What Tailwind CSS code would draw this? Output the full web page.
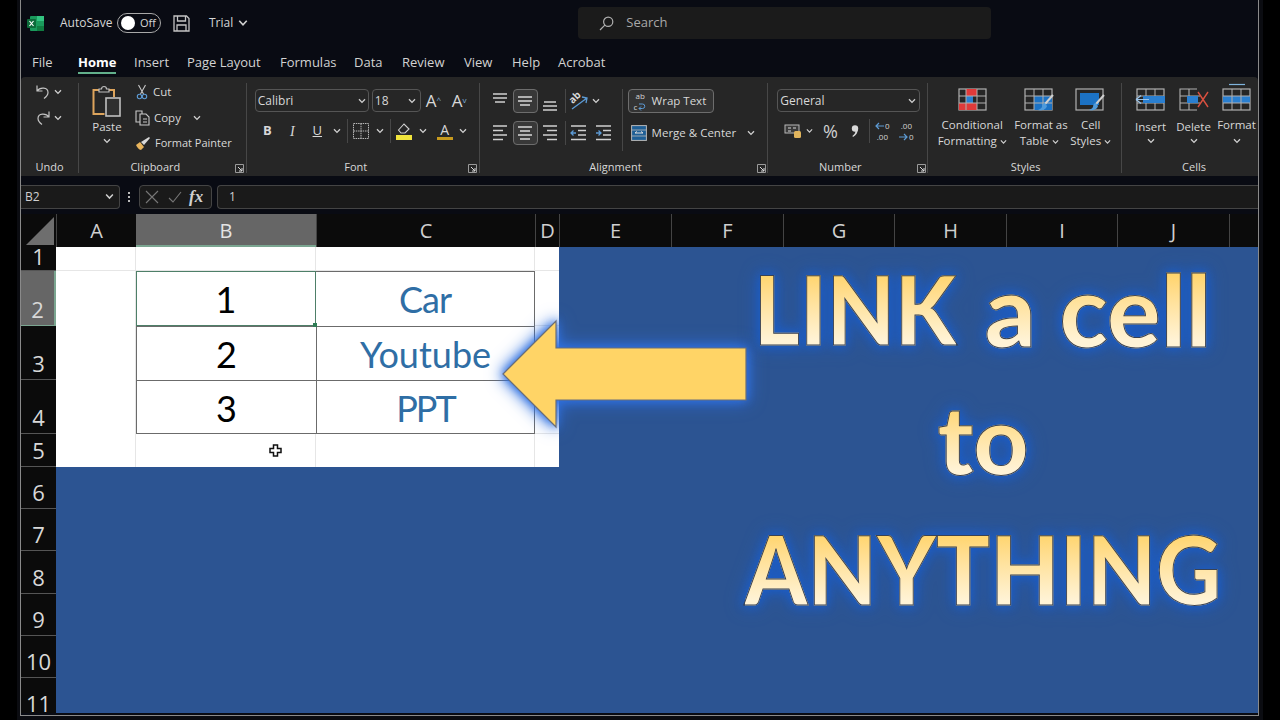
<!DOCTYPE html>
<html lang="en">
<head>
  <meta charset="UTF-8" />
  <title>LINK a cell to ANYTHING</title>
  <script src="https://cdn.jsdelivr.net/npm/@tailwindcss/browser@4"></script>
</head>
<body class="bg-black w-[1280px] h-[720px] overflow-hidden font-['Open_Sans',sans-serif] text-[#d6d6d6]">
  <svg class="hidden">
    <symbol id="chev" viewBox="0 0 8 6"><path d="M1 1.2 4 4.4 7 1.2" fill="none" stroke="#d0d0d0" stroke-width="1.3"/></symbol>
    <symbol id="launch" viewBox="0 0 9 9"><path d="M.5.5h8v8h-8z" fill="none" stroke="#9a9a9a"/><path d="M3 3l4 4M7 4v3H4" fill="none" stroke="#d8d8d8"/></symbol>
  </svg>

  <div class="ml-[17px] w-[1246px] h-[720px] bg-[#0b0c11] pl-[3px]">
    <div class="relative w-[1239px] h-[716px] bg-[#090b13] border-l border-r border-b border-[#8a8a8a] overflow-hidden">

      <!-- title bar -->
      <div class="flex items-center h-[45px] pt-[1px] text-[12px]">
        <svg class="ml-[6px] w-[17px] h-[17px]" viewBox="0 0 17 17"><rect x="3" y="1" width="14" height="15" rx="1" fill="#1a9a5c"/><rect x="10" y="1" width="7" height="5" fill="#33c481"/><rect x="10" y="11" width="7" height="5" fill="#107c41"/><rect y="4" width="9" height="9" rx="1" fill="#0c6b3a"/><path d="M2.5 6l4 5M6.5 6l-4 5" stroke="#fff" stroke-width="1.2"/></svg>
        <span class="ml-[16px] w-[52px]">AutoSave</span>
        <div class="ml-[5px] flex items-center w-[44px] h-[20px] rounded-full border border-[#a8a8a8] pl-[3px]">
          <span class="w-[14px] h-[14px] rounded-full bg-white"></span>
          <span class="ml-[5px] text-[11px]">Off</span>
        </div>
        <svg class="ml-[12px] w-[17px] h-[17px]" viewBox="0 0 17 17" fill="none" stroke="#c4c4c4" stroke-width="1.3"><path d="M1 1h12.5L16 3.500V16H1zM4.500 1v5h8V1M4 16v-6h9v6"/></svg>
        <span class="ml-[19px]">Trial</span>
        <svg class="ml-[5px] w-[10px] h-[8px]"><use href="#chev"/></svg>
        <div class="ml-[330px] flex items-center w-[413px] h-[32px] bg-[#1b1b1b] rounded-[4px] text-[#a8a8a8] text-[13px]">
          <svg class="ml-[21px] w-[15px] h-[15px]" viewBox="0 0 15 15" fill="none" stroke="#b0b0b0" stroke-width="1.2"><circle cx="9.200" cy="5.800" r="4.600"/><path d="M5.800 9.200 1 14"/></svg>
          <span class="ml-[12px]">Search</span>
        </div>
      </div>

      <!-- tabs -->
      <div class="flex h-[32px] text-[13px] leading-[34px] text-[#d2d2d2]">
        <span class="ml-[11px] w-[46px]">File</span>
        <span class="relative w-[56px] font-bold text-white">Home<i class="absolute left-0 bottom-[3px] w-[38px] h-[2px] bg-[#62b08b]"></i></span>
        <span class="w-[53px]">Insert</span>
        <span class="w-[93px]">Page Layout</span>
        <span class="w-[74px]">Formulas</span>
        <span class="w-[48px]">Data</span>
        <span class="w-[62px]">Review</span>
        <span class="w-[48px]">View</span>
        <span class="w-[46px]">Help</span>
        <span>Acrobat</span>
      </div>

      <!-- ribbon -->
      <div class="flex h-[99px] pt-[2px] bg-[#262626] rounded-t-[4px] text-[12px] text-[#d8d8d8]">

        <!-- undo -->
        <div class="w-[57px] flex flex-col">
          <div class="h-[81px] pl-[14px]">
            <div class="flex items-center h-[26px]">
              <svg class="w-[16px] h-[16px]" viewBox="0 0 16 16" fill="none" stroke="#c4c4c4" stroke-width="1.2"><path d="M2 1.500V7h5.500M2 7c3-4 11-4 11 1.500 0 2.500-2 4.500-4 6"/></svg>
              <svg class="ml-[3px] w-[8px] h-[6px]"><use href="#chev"/></svg>
            </div>
            <div class="flex items-center h-[26px]">
              <svg class="w-[16px] h-[16px]" viewBox="0 0 16 16" fill="none" stroke="#c4c4c4" stroke-width="1.2"><path d="M14 1.500V7H8.500M14 7C11 3 3 3 3 8.500c0 2.500 2 4.500 4 6"/></svg>
              <svg class="ml-[3px] w-[8px] h-[6px]"><use href="#chev"/></svg>
            </div>
          </div>
          <span class="text-center text-[11px] leading-[14px]">Undo</span>
        </div>
        <i class="w-px h-[90px] mt-[4px] bg-[#474747]"></i>

        <!-- clipboard -->
        <div class="relative w-[167px] flex flex-col">
          <div class="flex h-[81px]">
            <div class="ml-[13px] w-[30px] flex flex-col items-center">
              <svg class="mt-[6px] w-[30px] h-[32px]" viewBox="0 0 30 32" fill="none"><path d="M7 5H1.500v24h11" stroke="#dda45c" stroke-width="2"/><path d="M17 5h5v7" stroke="#dda45c" stroke-width="2"/><path d="M7 7V4h2.500a2.500 2.500 0 0 1 5 0H17v3z" stroke="#bdbdbd" stroke-width="1.2"/><rect x="14" y="13" width="14" height="18" stroke="#c0c0c0" stroke-width="1.6" fill="#2f2f2f"/></svg>
              <span class="mt-[2px] leading-[16px] text-[11.5px]">Paste</span>
              <svg class="mt-[3px] w-[8px] h-[6px]"><use href="#chev"/></svg>
            </div>
            <div class="ml-[13px] text-[11.5px]">
              <div class="flex items-center h-[26px]">
                <svg class="ml-[1px] w-[12px] h-[16px]" viewBox="0 0 12 16" fill="none" stroke-width="1.1"><path d="M2.500 1 7.500 10M9.500 1 4.500 10" stroke="#c8c8c8"/><circle cx="3.500" cy="12.500" r="2.200" stroke="#5d9bd5"/><circle cx="8.500" cy="12.500" r="2.200" stroke="#5d9bd5"/></svg>
                <span class="ml-[5px]">Cut</span>
              </div>
              <div class="flex items-center h-[26px]">
                <svg class="w-[15px] h-[16px]" viewBox="0 0 15 16" fill="none" stroke="#c8c8c8" stroke-width="1.1"><path d="M5 12H1V1h6v3"/><path d="M5 4h6l3 3v8H5zM8 9h4M8 12h4"/></svg>
                <span class="ml-[4px]">Copy</span>
                <svg class="ml-[12px] w-[8px] h-[6px]"><use href="#chev"/></svg>
              </div>
              <div class="flex items-center h-[25px]">
                <svg class="w-[16px] h-[14px]" viewBox="0 0 16 14"><path d="M1 8l4-3 4 5-3 3C4 13 2 10 1 8z" fill="#e8b45c"/><path d="M6 5l3 3 6-7-1-1z" fill="#d8d8d8"/></svg>
                <span class="ml-[4px] whitespace-nowrap text-[11px]">Format Painter</span>
              </div>
            </div>
          </div>
          <span class="pr-[14px] text-center text-[11px] leading-[14px]">Clipboard</span>
          <svg class="absolute left-[156px] top-[85px] w-[9px] h-[9px]"><use href="#launch"/></svg>
        </div>
        <i class="w-px h-[90px] mt-[4px] bg-[#474747]"></i>

        <!-- font -->
        <div class="relative w-[232px] flex flex-col">
          <div class="h-[81px] pl-[8px] pt-[10px]">
            <div class="flex items-center h-[23px]">
              <div class="flex items-center justify-between w-[114px] h-[23px] border border-[#555] rounded-[4px] px-[2px] text-[12px]">Calibri<svg class="w-[8px] h-[6px]"><use href="#chev"/></svg></div>
              <div class="ml-[3px] flex items-center justify-between w-[49px] h-[23px] border border-[#555] rounded-[4px] px-[2px] text-[12px]">18<svg class="mr-[2px] w-[8px] h-[6px]"><use href="#chev"/></svg></div>
              <span class="ml-[5px] w-[19px] text-[17px] leading-none whitespace-nowrap">A<sup class="text-[#7fb3dc] text-[8px]">^</sup></span>
              <span class="ml-[7px] w-[19px] text-[17px] leading-none whitespace-nowrap">A<sup class="text-[#7fb3dc] text-[8px]">v</sup></span>
            </div>
            <div class="flex items-center h-[24px] mt-[7px] text-[13px]">
              <span class="w-[25px] text-center font-bold">B</span>
              <span class="w-[25px] text-center italic font-['Liberation_Serif',serif] text-[14px]">I</span>
              <span class="w-[25px] text-center underline">U</span>
              <span class="w-[14px] flex justify-center"><svg class="w-[8px] h-[6px]"><use href="#chev"/></svg></span>
              <i class="ml-[3px] w-px h-[24px] bg-[#474747]"></i>
              <svg class="ml-[2px] w-[22px] h-[16px]" viewBox="0 0 22 16" fill="none" stroke="#b8b8b8"><path d="M3.500.5h15v15h-15zM11 .5v15M3.500 8h15" stroke-dasharray="1.500 .8"/></svg>
              <span class="ml-[1px] w-[14px] flex justify-center"><svg class="w-[8px] h-[6px]"><use href="#chev"/></svg></span>
              <i class="ml-[3px] w-px h-[24px] bg-[#474747]"></i>
              <svg class="ml-[2px] w-[22px] h-[18px]" viewBox="0 0 22 18" fill="none"><path d="M5.500 8 11 2l5 5-4 4H8z" stroke="#d0d0d0" stroke-width="1.1"/><rect x="3" y="13" width="16" height="5" fill="#f0e43c"/></svg>
              <span class="ml-[1px] w-[14px] flex justify-center"><svg class="w-[8px] h-[6px]"><use href="#chev"/></svg></span>
              <span class="ml-[4px] w-[22px] flex flex-col items-center"><span class="text-[14px] leading-[14px]">A</span><i class="w-[16px] h-[3px] bg-[#c79a1e]"></i></span>
              <span class="w-[14px] flex justify-center"><svg class="w-[8px] h-[6px]"><use href="#chev"/></svg></span>
            </div>
          </div>
          <span class="pr-[14px] text-center text-[11px] leading-[14px]">Font</span>
          <svg class="absolute left-[221px] top-[85px] w-[9px] h-[9px]"><use href="#launch"/></svg>
        </div>
        <i class="w-px h-[90px] mt-[4px] bg-[#474747]"></i>

        <!-- alignment -->
        <div class="relative w-[288px] flex flex-col">
          <div class="flex h-[81px] pl-[8px] pt-[10px]">
            <div class="w-[134px]">
              <div class="flex items-center h-[24px]">
                <svg class="w-[25px] h-[24px]" viewBox="0 0 25 24" stroke="#d0d0d0" stroke-width="1.3"><path d="M5 5h14M5 9h14M7 13h10"/></svg>
                <span class="w-[25px] h-[24px] flex items-center justify-center border border-[#6d6d6d] rounded-[4px] bg-[#383838]"><svg class="w-[16px] h-[12px]" viewBox="0 0 16 12" stroke="#d8d8d8" stroke-width="1.3"><path d="M1 2h14M1 6h14M3 10h10"/></svg></span>
                <svg class="w-[25px] h-[24px]" viewBox="0 0 25 24" stroke="#d0d0d0" stroke-width="1.3"><path d="M6 13h12M5 17h14M5 21h14"/></svg>
                <i class="ml-[2px] w-px h-[24px] bg-[#474747]"></i>
                <span class="relative ml-[1px] w-[22px] h-[22px]">
                  <span class="absolute left-[1px] top-[1px] text-[10px] leading-[12px] font-bold -rotate-45">ab</span>
                  <svg class="absolute left-0 top-0 w-[22px] h-[22px]" viewBox="0 0 22 22" fill="none"><path d="M5 19 20 8M15 7l5 1-1 5" stroke="#5d9bd5" stroke-width="1.3"/></svg>
                </span>
                <svg class="ml-[3px] w-[8px] h-[6px]"><use href="#chev"/></svg>
              </div>
              <div class="flex items-center h-[24px] mt-[8px]">
                <svg class="w-[25px] h-[24px]" viewBox="0 0 25 24" stroke="#d0d0d0" stroke-width="1.3"><path d="M5 5h14M5 9.500h10M5 14h14M5 18.500h10"/></svg>
                <span class="w-[25px] h-[24px] flex items-center justify-center border border-[#6d6d6d] rounded-[4px] bg-[#383838]"><svg class="w-[16px] h-[16px]" viewBox="0 0 16 16" stroke="#d8d8d8" stroke-width="1.3"><path d="M1 2h14M3 6h10M1 10h14M3 14h10"/></svg></span>
                <svg class="w-[25px] h-[24px]" viewBox="0 0 25 24" stroke="#d0d0d0" stroke-width="1.3"><path d="M5 5h14M9 9.500h10M5 14h14M9 18.500h10"/></svg>
                <i class="ml-[2px] w-px h-[24px] bg-[#474747]"></i>
                <svg class="w-[25px] h-[24px]" viewBox="0 0 25 24" fill="none" stroke="#d0d0d0" stroke-width="1.3"><path d="M5 5h15M12 9.500h8M12 14h8M5 18.500h15"/><path d="M10 12H5M7.500 9.500 5 12l2.500 2.500" stroke="#5d9bd5"/></svg>
                <svg class="w-[25px] h-[24px]" viewBox="0 0 25 24" fill="none" stroke="#d0d0d0" stroke-width="1.3"><path d="M5 5h15M12 9.500h8M12 14h8M5 18.500h15"/><path d="M5 12h5M7.500 9.500 10 12l-2.500 2.500" stroke="#5d9bd5"/></svg>
              </div>
            </div>
            <i class="w-px h-[62px] bg-[#474747]"></i>
            <div class="ml-[5px]">
              <div class="flex items-center w-[86px] h-[24px] border border-[#6d6d6d] rounded-[4px] bg-[#333] text-[11.5px] whitespace-nowrap">
                <span class="ml-[5px] w-[15px] shrink-0 flex flex-col text-[8px] leading-[11px] text-[#d4d4d4]">
                  <span class="pl-[2px]">ab</span>
                  <span class="flex items-center">c<svg class="ml-[1px] w-[8px] h-[8px]" viewBox="0 0 8 8" fill="none" stroke="#5d9bd5"><path d="M1 1h3.500a2 2 0 0 1 0 4.500H1M3 3.500 1 5.500l2 2"/></svg></span>
                </span>
                <span class="ml-[3px]">Wrap Text</span>
              </div>
              <div class="flex items-center h-[24px] mt-[8px] text-[11.5px] whitespace-nowrap">
                <svg class="ml-[3px] w-[16px] h-[16px]" viewBox="0 0 16 16" fill="none"><rect x=".6" y=".6" width="14.800" height="14.800" stroke="#b8b8b8" fill="#1f5f96"/><path d="M1 5h14M1 11h14" stroke="#b8b8b8" stroke-width=".8"/><path d="M4 8h8M4 8l2-1.500M12 8l-2-1.500" stroke="#e0e0e0"/></svg>
                <span class="ml-[5px] w-[92px]">Merge &amp; Center</span>
                <svg class="ml-[3px] w-[8px] h-[6px]"><use href="#chev"/></svg>
              </div>
            </div>
          </div>
          <span class="pr-[16px] text-center text-[11px] leading-[14px]">Alignment</span>
          <svg class="absolute left-[277px] top-[85px] w-[9px] h-[9px]"><use href="#launch"/></svg>
        </div>
        <i class="w-px h-[90px] mt-[4px] bg-[#474747]"></i>

        <!-- number -->
        <div class="relative w-[159px] flex flex-col">
          <div class="h-[81px] pl-[9px] pt-[10px]">
            <div class="flex items-center justify-between w-[143px] h-[23px] border border-[#555] rounded-[4px] px-[2px] text-[12px]">General<svg class="mr-[1px] w-[8px] h-[6px]"><use href="#chev"/></svg></div>
            <div class="flex items-center h-[24px] mt-[7px]">
              <svg class="ml-[7px] w-[20px] h-[16px]" viewBox="0 0 20 16" fill="none"><rect x="1" y="2" width="14" height="8" stroke="#b8b8b8" fill="#3a3a3a"/><path d="M4 5h3M9 5h3M4 8h3" stroke="#d8d8d8"/><rect x="10" y="8" width="7" height="7" rx="1.500" fill="#e0b45c"/></svg>
              <span class="w-[10px] flex justify-center"><svg class="w-[7px] h-[6px]"><use href="#chev"/></svg></span>
              <span class="ml-[4px] w-[24px] text-center text-[18px] leading-none text-[#cfcfcf]">%</span>
              <svg class="ml-[1px] w-[24px] h-[16px]" viewBox="0 0 24 16"><circle cx="12" cy="5.500" r="3.200" fill="#d8d8d8"/><path d="M15 5.500c0 4-2 7-5 8.500l-.6-1c2-1.500 3-3 3-5z" fill="#d8d8d8"/></svg>
              <i class="ml-[2px] w-px h-[24px] bg-[#474747]"></i>
              <span class="w-[24px] flex flex-col items-center text-[8px] leading-[11px] text-[#d4d4d4]">
                <span class="flex items-center"><svg class="mr-[1px] w-[9px] h-[8px]" viewBox="0 0 9 8" fill="none" stroke="#5d9bd5" stroke-width="1.2"><path d="M9 4H1M4 1 1 4l3 3"/></svg>0</span>
                <span>.00</span>
              </span>
              <span class="w-[24px] flex flex-col items-center text-[8px] leading-[11px] text-[#d4d4d4]">
                <span>.00</span>
                <span class="flex items-center"><svg class="mr-[1px] w-[9px] h-[8px]" viewBox="0 0 9 8" fill="none" stroke="#5d9bd5" stroke-width="1.2"><path d="M0 4h8M5 1l3 3-3 3"/></svg>0</span>
              </span>
            </div>
          </div>
          <span class="pr-[15px] text-center text-[11px] leading-[14px]">Number</span>
          <svg class="absolute left-[149px] top-[85px] w-[9px] h-[9px]"><use href="#launch"/></svg>
        </div>
        <i class="w-px h-[90px] mt-[4px] bg-[#474747]"></i>

        <!-- styles -->
        <div class="w-[193px] flex flex-col">
          <div class="flex h-[81px] pt-[9px] pl-[2px] text-center text-[11.5px] leading-[16px]">
            <div class="w-[84px] shrink-0">
              <svg class="mx-auto w-[29px] h-[23px]" viewBox="0 0 29 23"><rect x="1" y="1" width="27" height="21" fill="none" stroke="#b0b0b0" stroke-width="1.2"/><path d="M8 1h11v7H8zM1 15h18v7H1z" fill="#e03a3a"/><path d="M8 8h7v7H8z" fill="#2a7fd0"/><path d="M1 8h27M1 15h27M8 1v21M19 1v21" stroke="#b0b0b0"/></svg>
              <div class="mt-[6px] whitespace-nowrap">Conditional</div>
              <div class="whitespace-nowrap">Formatting <svg class="inline w-[7px] h-[6px]"><use href="#chev"/></svg></div>
            </div>
            <div class="w-[50px] shrink-0">
              <svg class="mx-auto w-[31px] h-[23px]" viewBox="0 0 31 23"><rect x="1" y="1" width="27" height="21" fill="none" stroke="#b0b0b0" stroke-width="1.2"/><path d="M10 8h18v14H10z" fill="#1c72c4"/><path d="M1 8h27M1 15h27M10 1v21M19 1v21" stroke="#b0b0b0"/><path d="M29 7 21 16" stroke="#d0d0d0" stroke-width="2"/><path d="M21 15c-2 0-3 2-3 4-1 2-3 2-4 3 3 1 8 0 9-4z" fill="#4f9bdc"/></svg>
              <div class="mt-[6px] whitespace-nowrap">Format as</div>
              <div class="whitespace-nowrap">Table <svg class="inline w-[7px] h-[6px]"><use href="#chev"/></svg></div>
            </div>
            <div class="w-[53px] shrink-0">
              <svg class="mx-auto w-[31px] h-[23px]" viewBox="0 0 31 23"><rect x="1" y="1" width="27" height="21" fill="none" stroke="#b0b0b0" stroke-width="1.2"/><rect x="5" y="5" width="19" height="12" fill="#1c72c4"/><path d="M29 7 21 16" stroke="#d0d0d0" stroke-width="2"/><path d="M21 15c-2 0-3 2-3 4-1 2-3 2-4 3 3 1 8 0 9-4z" fill="#4f9bdc"/></svg>
              <div class="mt-[6px] whitespace-nowrap">Cell</div>
              <div class="whitespace-nowrap">Styles <svg class="inline w-[7px] h-[6px]"><use href="#chev"/></svg></div>
            </div>
          </div>
          <span class="pl-[2px] text-center text-[11px] leading-[14px]">Styles</span>
        </div>
        <i class="w-px h-[90px] mt-[4px] bg-[#474747]"></i>

        <!-- cells -->
        <div class="flex-1 flex flex-col">
          <div class="flex h-[81px] pt-[9px] pl-[7px] text-center text-[11.5px] leading-[16px]">
            <div class="w-[43px] flex flex-col items-center">
              <svg class="w-[31px] h-[23px]" viewBox="0 0 31 23" fill="none"><rect x="2" y="1" width="27" height="21" stroke="#b0b0b0" stroke-width="1.2"/><path d="M2 8h27M2 15h27M11 1v21M20 1v21" stroke="#b0b0b0"/><rect x="8" y="8" width="22" height="7" fill="#2a7fd0"/><path d="M1 11.500h13M1 11.500l5-4M1 11.500l5 4" stroke="#9cc4e8" stroke-width="1.2"/></svg>
              <div class="mt-[8px]">Insert</div>
              <svg class="mt-[3px] w-[8px] h-[6px]"><use href="#chev"/></svg>
            </div>
            <div class="w-[43px] flex flex-col items-center">
              <svg class="w-[31px] h-[23px]" viewBox="0 0 31 23" fill="none"><path d="M19 1H2v21h17M2 8h20M2 15h20M11 1v21" stroke="#b0b0b0" stroke-width="1.1"/><rect x="9" y="8" width="11" height="7" fill="#2a7fd0"/><path d="M20 4l10 15M30 4 20 19" stroke="#d9503f" stroke-width="1.4"/></svg>
              <div class="mt-[8px]">Delete</div>
              <svg class="mt-[3px] w-[8px] h-[6px]"><use href="#chev"/></svg>
            </div>
            <div class="w-[43px] flex flex-col items-center">
              <svg class="mt-[-5px] w-[31px] h-[28px]" viewBox="0 0 31 28" fill="none"><path d="M8 1.500h16" stroke="#7fb3dc" stroke-width="1.2"/><rect x="2" y="6" width="27" height="21" stroke="#b0b0b0" stroke-width="1.2"/><rect x="2" y="13" width="27" height="7" fill="#2a7fd0"/><path d="M2 13h27M2 20h27M11 6v21M20 6v21" stroke="#b0b0b0"/></svg>
              <div class="mt-[6px]">Format</div>
              <svg class="mt-[5px] w-[8px] h-[6px]"><use href="#chev"/></svg>
            </div>
          </div>
          <span class="pl-[8px] text-center text-[11px] leading-[14px]">Cells</span>
        </div>
      </div>

      <!-- formula bar -->
      <div class="flex items-center h-[38px] pt-[3px] text-[12px] text-[#d0d0d0]">
        <div class="flex items-center justify-between w-[99px] h-[24px] border border-[#444] border-l-0 rounded-r-[4px] bg-[#1a1a1a] pl-[4px] pr-[5px]">B2<svg class="w-[9px] h-[7px]"><use href="#chev"/></svg></div>
        <div class="ml-[8px] flex flex-col gap-[2px]"><i class="w-[2px] h-[2px] bg-[#bbb]"></i><i class="w-[2px] h-[2px] bg-[#bbb]"></i><i class="w-[2px] h-[2px] bg-[#bbb]"></i></div>
        <div class="ml-[9px] flex items-center w-[73px] h-[24px] border border-[#444] rounded-[4px] bg-[#1a1a1a] pl-[5px]">
          <svg class="w-[14px] h-[14px]" viewBox="0 0 14 14" stroke="#777" stroke-width="1.1"><path d="M1 1l12 12M13 1 1 13"/></svg>
          <svg class="ml-[9px] w-[14px] h-[14px]" viewBox="0 0 14 14" fill="none" stroke="#777" stroke-width="1.1"><path d="M1 8l4 4 8-10"/></svg>
          <span class="ml-[7px] font-['Liberation_Serif',serif] italic font-bold text-[17px] leading-none">fx</span>
        </div>
        <div class="ml-[5px] flex-1 flex items-center h-[24px] border border-[#444] border-r-0 rounded-l-[4px] bg-[#1a1a1a] pl-[11px]">1</div>
      </div>

      <!-- column headers -->
      <div class="flex h-[33px] bg-[#0b0b0b] text-[20px] text-[#d0d0d0] leading-[33px] text-center">
        <div class="w-[35px] flex justify-end items-end pb-[2px] pr-[2px]"><svg class="w-[28px] h-[28px]" viewBox="0 0 28 28"><path d="M28 0v28H0z" fill="#6e6e6e"/></svg></div>
        <div class="w-[80px] border-l border-[#444]">A</div>
        <div class="w-[180px] bg-[#666] border-b-2 border-[#7aa590] text-[#e4e4e4]">B</div>
        <div class="w-[219px] border-l border-[#444]">C</div>
        <div class="w-[24px] border-l border-[#444]">D</div>
        <div class="w-[112px] border-l border-[#444]">E</div>
        <div class="w-[112px] border-l border-[#444]">F</div>
        <div class="w-[111px] border-l border-[#444]">G</div>
        <div class="w-[112px] border-l border-[#444]">H</div>
        <div class="w-[111px] border-l border-[#444]">I</div>
        <div class="w-[112px] border-l border-[#444]">J</div>
        <div class="flex-1 border-l border-[#444]"></div>
      </div>

      <!-- sheet -->
      <div class="flex h-[466px] overflow-hidden">
        <div class="w-[35px] shrink-0 bg-[#0b0b0b] text-[22px] leading-[28px] text-[#d8d8d8] text-center">
          <div class="flex items-end justify-center h-[24px] overflow-hidden border-b border-[#555]"><span class="block">1</span></div>
          <div class="flex items-end justify-center h-[55px] pb-[2px] bg-[#666] border-b border-[#7aa590] border-r-2">2</div>
          <div class="flex items-end justify-center h-[54px] pb-[2px] border-b border-[#555]">3</div>
          <div class="flex items-end justify-center h-[54px] pb-[2px] border-b border-[#555]">4</div>
          <div class="flex items-center justify-center h-[33px] border-b border-[#555]">5</div>
          <div class="flex items-end justify-center h-[42px] pb-[2px] border-b border-[#555]">6</div>
          <div class="flex items-end justify-center h-[42px] pb-[2px] border-b border-[#555]">7</div>
          <div class="flex items-end justify-center h-[43px] pb-[2px] border-b border-[#555]">8</div>
          <div class="flex items-end justify-center h-[42px] pb-[2px] border-b border-[#555]">9</div>
          <div class="flex items-end justify-center h-[42px] pb-[2px] border-b border-[#555]">10</div>
          <div class="flex items-start justify-center h-[42px] pt-[11px]">11</div>
        </div>
        <div class="flex-1 bg-[#2c5492]">
          <div class="grid grid-cols-[80px_180px_219px_24px] grid-rows-[24px_55px_54px_54px_33px] w-[503px] h-[220px] bg-white text-[36px] font-['Lato',sans-serif] text-center">
            <div class="border-r border-b border-[#e6e6e6]"></div>
            <div class="border-r border-b border-[#e6e6e6]"></div>
            <div class="border-r border-b border-[#e6e6e6]"></div>
            <div class="border-b border-[#e6e6e6]"></div>

            <div class="border-r border-[#e6e6e6]"></div>
            <div class="relative border border-[#4e7f68] leading-[54px] text-black">1<i class="absolute right-[-2px] bottom-[-2px] w-[4px] h-[4px] bg-[#2f7d55]"></i></div>
            <div class="border-t border-r border-[#6b6b6b] leading-[54px] text-[#2f6ea5] tracking-[-1px]">Car</div>
            <div class="border-b border-[#e6e6e6]"></div>

            <div class="border-r border-[#e6e6e6]"></div>
            <div class="border-t border-l border-[#6b6b6b] leading-[54px] text-black">2</div>
            <div class="border-t border-l border-r border-[#6b6b6b] leading-[54px] text-[#2f6ea5]">Youtube</div>
            <div class="border-b border-[#e6e6e6]"></div>

            <div class="border-r border-[#e6e6e6]"></div>
            <div class="border-t border-b border-l border-[#6b6b6b] leading-[54px] text-black">3</div>
            <div class="border border-[#6b6b6b] leading-[54px] text-[#2f6ea5] tracking-[-2px]">PPT</div>
            <div class="border-b border-[#e6e6e6]"></div>

            <div class="border-r border-[#e6e6e6]"></div>
            <div class="flex items-center border-r border-[#e6e6e6] pl-[133px]">
              <svg class="w-[13px] h-[13px]" viewBox="0 0 13 13"><path d="M4.500 1h4v3.500H12v4H8.500V12h-4V8.500H1v-4h3.500z" fill="#fff" stroke="#111" stroke-width="1.5"/></svg>
            </div>
            <div class="border-r border-[#e6e6e6]"></div>
            <div></div>
          </div>
        </div>
      </div>

      <!-- thumbnail overlay: arrow -->
      <svg class="absolute left-[473px] top-[311px] w-[260px] h-[126px] overflow-visible [filter:drop-shadow(0_0_4px_#2f70e0)_drop-shadow(0_0_8px_#2f70e0)]" viewBox="0 0 260 126"><path d="M9 63 62 10V37H252V89H62V116z" fill="#ffd466" stroke="#6a6e78" stroke-width="1.2"/></svg>

      <!-- thumbnail overlay: headline -->
      <div class="absolute left-[692px] top-[243px] w-[540px] flex flex-col items-center font-['Lato',sans-serif] font-black text-[96px] leading-[130px] [filter:drop-shadow(0_0_4px_#1c5cc4)_drop-shadow(0_0_8px_#1c5cc4)]">
        <div class="flex whitespace-nowrap">
          <span class="mx-[-9px] bg-linear-to-b from-[#ffd56e] from-25% to-[#fff3d6] to-75% bg-clip-text text-transparent [-webkit-text-stroke:1px_#3a4252] scale-x-[.92]">LINK</span>
          <span class="ml-[28px] text-[100px] bg-linear-to-b from-[#ffd56e] from-25% to-[#fff3d6] to-75% bg-clip-text text-transparent [-webkit-text-stroke:1px_#3a4252]">a cell</span>
        </div>
        <span class="bg-linear-to-b from-[#ffd56e] from-25% to-[#fff3d6] to-75% bg-clip-text text-transparent [-webkit-text-stroke:1px_#3a4252]">to</span>
        <span class="bg-linear-to-b from-[#ffd56e] from-25% to-[#fff3d6] to-75% bg-clip-text text-transparent [-webkit-text-stroke:1px_#3a4252] whitespace-nowrap scale-x-[.935]">ANYTHING</span>
      </div>
    </div>
  </div>
</body>
</html>
